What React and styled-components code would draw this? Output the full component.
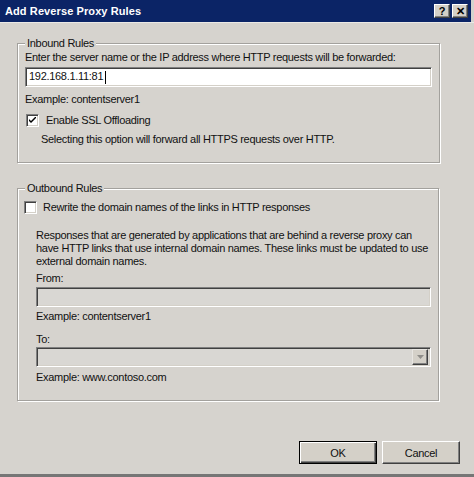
import React from "react";
import styled, { createGlobalStyle } from "styled-components";

const GlobalStyle = createGlobalStyle`
  html, body { margin: 0; padding: 0; }
  body {
    background: #d6d3ce;
    font-family: "Liberation Sans", Arial, sans-serif;
    font-size: 11px;
    color: #000;
  }
  * { box-sizing: border-box; }
`;

const PANEL = "#d6d3ce";

const Window = styled.div`
  width: 474px;
  height: 477px;
  background: ${PANEL};
  display: flex;
  flex-direction: column;
  border-bottom: 3px solid #767676;
  overflow: hidden;
`;

const TitleBar = styled.div`
  height: 22px;
  margin-right: 3px;
  background: #0b2466;
  display: flex;
  align-items: center;
  justify-content: space-between;
  padding: 0 3px 0 5px;
`;

const Title = styled.span`
  color: #fff;
  font-weight: bold;
  font-size: 11px;
  letter-spacing: 0.1px;
`;

const CaptionButtons = styled.div`
  display: flex;
  gap: 2px;
`;

const CaptionButton = styled.div`
  width: 16px;
  height: 14px;
  background: #d4d0c8;
  border: 1px solid;
  border-color: #fff #404040 #404040 #fff;
  box-shadow: inset -1px -1px 0 #808080;
  display: flex;
  align-items: center;
  justify-content: center;
  font-weight: bold;
  font-size: 11px;
  line-height: 1;
  color: #000;
`;

const Body = styled.div`
  flex: 1;
  display: flex;
  flex-direction: column;
  padding: 20px 34px 0 17px;
  border-top: 1px solid #ebe9e6;
  letter-spacing: -0.3px;
  color: #111;
`;

const GroupBox = styled.div`
  position: relative;
  border: 1px solid #a3a19d;
  box-shadow: inset 1px 1px 0 #fff, 1px 1px 0 #fff;
  padding: ${(p) => p.$pad};
  margin-top: ${(p) => p.$mt || "0px"};
  margin-right: ${(p) => p.$mr || "0px"};
  display: flex;
  flex-direction: column;
`;

const Legend = styled.span`
  position: absolute;
  top: -7px;
  left: 7px;
  padding: 0 2px;
  background: ${PANEL};
  line-height: 13px;
`;

const Text = styled.div`
  line-height: 13px;
  white-space: nowrap;
  margin-top: ${(p) => p.$mt || "0px"};
  padding-left: ${(p) => p.$pl || "0px"};
`;

const Field = styled.div`
  height: 20px;
  margin-top: ${(p) => p.$mt || "0px"};
  background: ${(p) => (p.$disabled ? "#d9d7d3" : "#fff")};
  border: 1px solid;
  border-color: #808080 #fff #fff #808080;
  box-shadow: inset 1px 1px 0 #404040, inset -1px -1px 0 #d4d0c8;
  display: flex;
  align-items: center;
  justify-content: space-between;
  padding: 0 2px 0 3px;
  line-height: 13px;
`;

const Caret = styled.span`
  display: inline-block;
  width: 1px;
  height: 13px;
  background: #000;
  vertical-align: middle;
  margin-left: 2px;
`;

const DropButton = styled.div`
  width: 16px;
  height: 16px;
  background: #d4d0c8;
  border: 1px solid;
  border-color: #e8e6e2 #404040 #404040 #e8e6e2;
  box-shadow: inset -1px -1px 0 #808080;
  display: flex;
  align-items: center;
  justify-content: center;
`;

const CheckRow = styled.div`
  display: flex;
  align-items: center;
  gap: ${(p) => p.$gap};
  margin-top: ${(p) => p.$mt || "0px"};
  padding-left: ${(p) => p.$pl || "0px"};
  line-height: 13px;
`;

const CheckBox = styled.span`
  width: 13px;
  height: 13px;
  flex: none;
  background: #fff;
  border: 1px solid;
  border-color: #808080 #fff #fff #808080;
  box-shadow: inset 1px 1px 0 #404040, inset -1px -1px 0 #d4d0c8;
  display: flex;
  align-items: center;
  justify-content: center;
`;

const Section = styled.div`
  padding-left: ${(p) => p.$pl};
  display: flex;
  flex-direction: column;
`;

const ButtonRow = styled.div`
  display: flex;
  justify-content: flex-end;
  gap: 5px;
  margin-top: 40px;
  margin-right: -20px;
`;

const PushButton = styled.button`
  width: 78px;
  height: 23px;
  font-family: inherit;
  font-size: 11px;
  letter-spacing: inherit;
  color: #111;
  background: #d4d0c8;
  padding: 0;
  border: 1px solid;
  border-color: ${(p) => (p.$default ? "#000" : "#fff #404040 #404040 #fff")};
  box-shadow: ${(p) =>
    p.$default
      ? "inset 1px 1px 0 #fff, inset -1px -1px 0 #404040, inset -2px -2px 0 #808080"
      : "inset -1px -1px 0 #808080"};
`;

const CheckMark = () => (
  <svg width="7" height="7" viewBox="0 0 7 7">
    <path d="M0 2 L0 4 L2 6 L7 1 L7 -1 L2 4 Z" fill="#000" />
  </svg>
);

const DownArrow = () => (
  <svg width="7" height="4" viewBox="0 0 7 4">
    <path d="M0 0 H7 L3.5 4 Z" fill="#8f8d89" />
  </svg>
);

export default function App() {
  return (
    <>
      <GlobalStyle />
      <Window>
        <TitleBar>
          <Title>Add Reverse Proxy Rules</Title>
          <CaptionButtons>
            <CaptionButton>?</CaptionButton>
            <CaptionButton>✕</CaptionButton>
          </CaptionButtons>
        </TitleBar>
        <Body>
          <GroupBox $pad="7px 7px 16px 7px">
            <Legend>Inbound Rules</Legend>
            <Text>Enter the server name or the IP address where HTTP requests will be forwarded:</Text>
            <Field $mt="3px">
              <span>
                192.168.1.11:81
                <Caret />
              </span>
            </Field>
            <Text $mt="6px">Example: contentserver1</Text>
            <CheckRow $mt="8px" $pl="1px" $gap="7px">
              <CheckBox>
                <CheckMark />
              </CheckBox>
              <span>Enable SSL Offloading</span>
            </CheckRow>
            <Text $mt="6px" $pl="16px">Selecting this option will forward all HTTPS requests over HTTP.</Text>
          </GroupBox>

          <GroupBox $pad="12px 7px 16px 6px" $mt="25px" $mr="1px">
            <Legend>Outbound Rules</Legend>
            <CheckRow $gap="6px">
              <CheckBox />
              <span>Rewrite the domain names of the links in HTTP responses</span>
            </CheckRow>
            <Section $pl="12px">
              <Text $mt="15px">Responses that are generated by applications that are behind a reverse proxy can</Text>
              <Text>have HTTP links that use internal domain names. These links must be updated to use</Text>
              <Text>external domain names.</Text>
              <Text $mt="4px">From:</Text>
              <Field $mt="2px" $disabled />
              <Text $mt="3px">Example: contentserver1</Text>
              <Text $mt="10px">To:</Text>
              <Field $mt="1px" $disabled>
                <span />
                <DropButton>
                  <DownArrow />
                </DropButton>
              </Field>
              <Text $mt="4px">Example: www.contoso.com</Text>
            </Section>
          </GroupBox>

          <ButtonRow>
            <PushButton $default>OK</PushButton>
            <PushButton>Cancel</PushButton>
          </ButtonRow>
        </Body>
      </Window>
    </>
  );
}
